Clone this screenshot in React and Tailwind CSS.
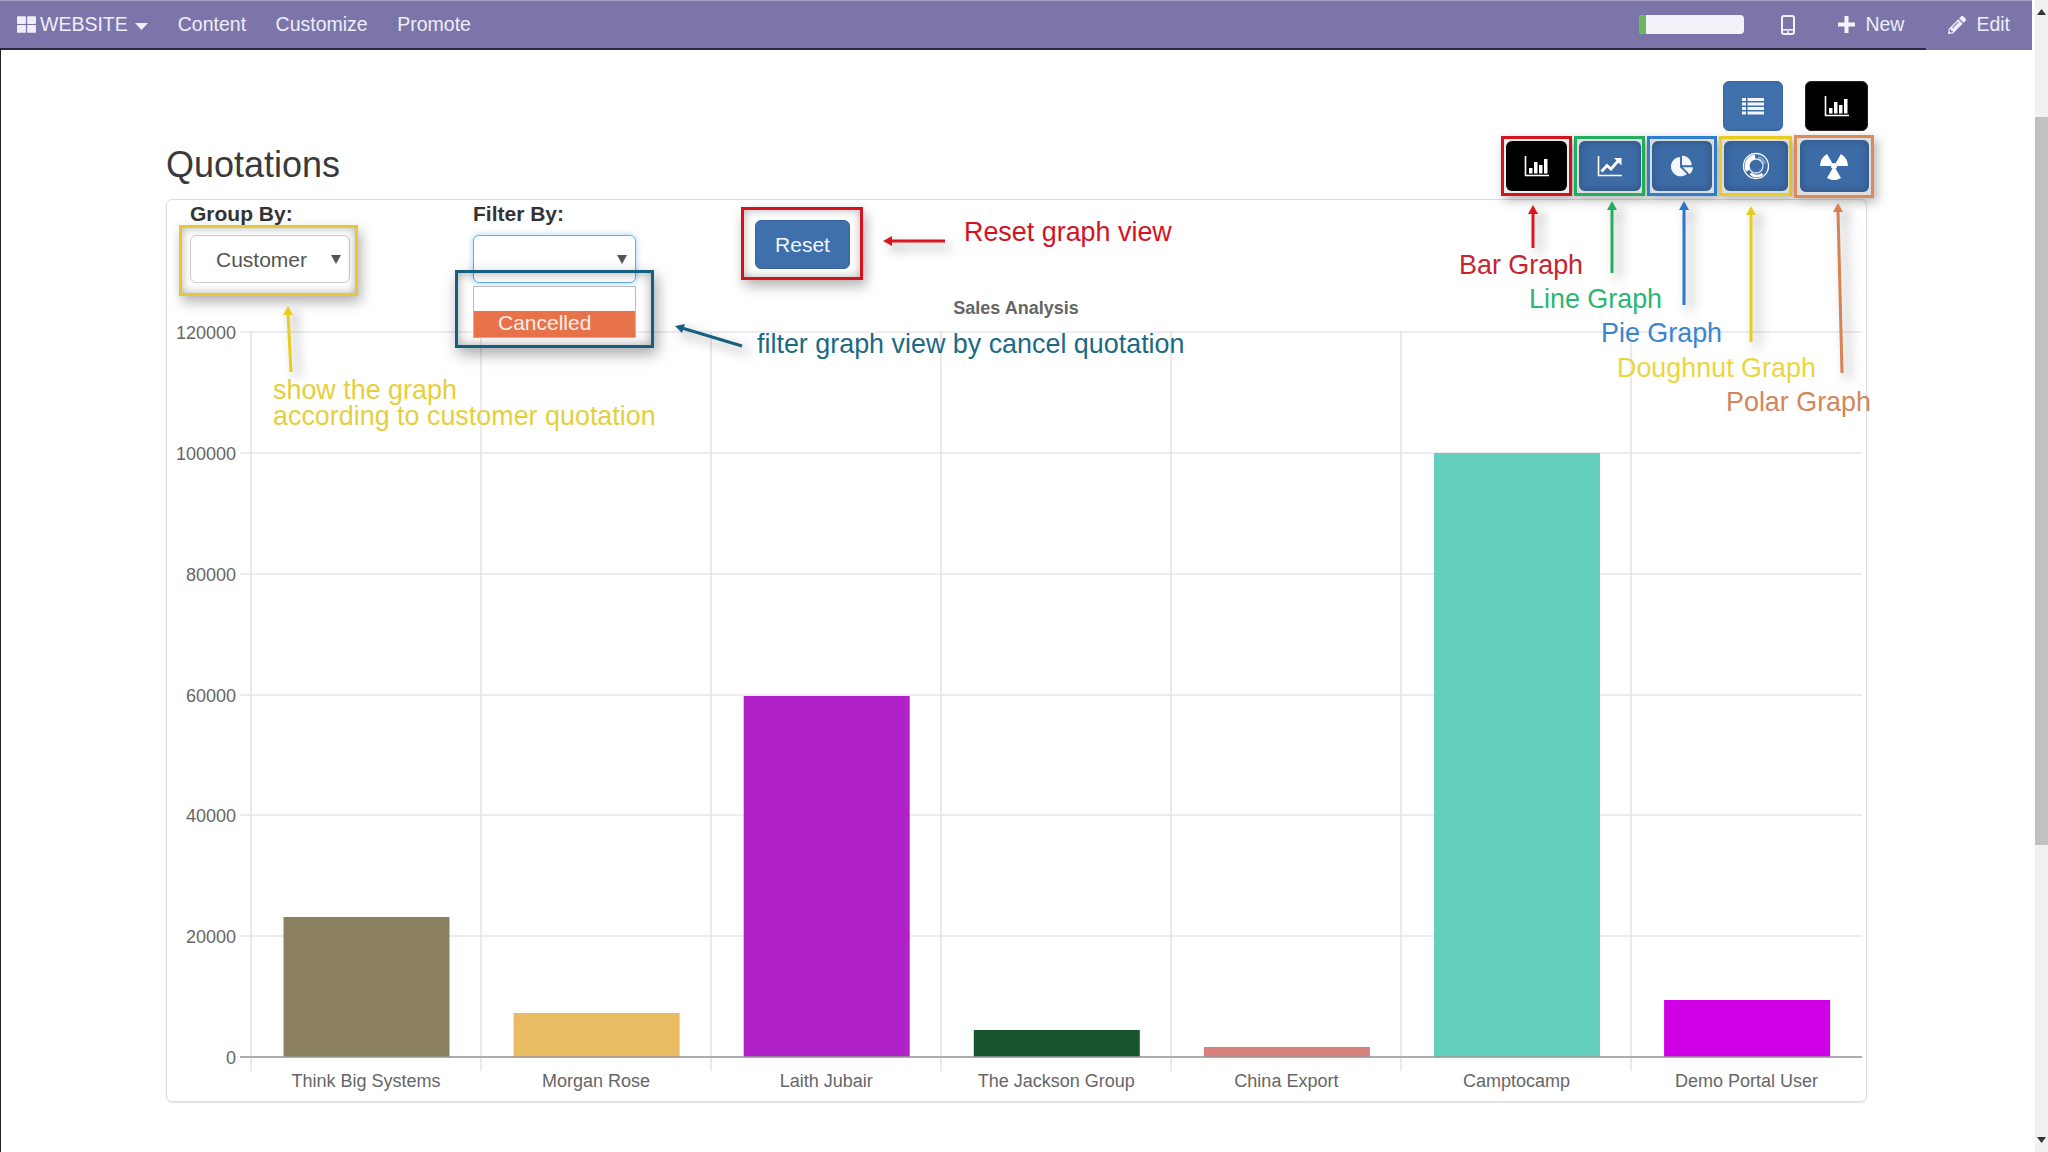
import { FaChartPie, FaPencilAlt, FaThLarge } from "react-icons/fa";

const yTicks = [
  { label: "120000", y: 332 },
  { label: "100000", y: 453 },
  { label: "80000", y: 574 },
  { label: "60000", y: 695 },
  { label: "40000", y: 815 },
  { label: "20000", y: 936 },
  { label: "0", y: 1057 },
];

const bars = [
  { label: "Think Big Systems", top: 917, color: "#8b8160" },
  { label: "Morgan Rose", top: 1013, color: "#e9bb62" },
  { label: "Laith Jubair", top: 696, color: "#b022c8" },
  { label: "The Jackson Group", top: 1030, color: "#16552e" },
  { label: "China Export", top: 1047, color: "#d6807c" },
  { label: "Camptocamp", top: 453, color: "#65cfbd" },
  { label: "Demo Portal User", top: 1000, color: "#cf00e6" },
];

function ListIcon() {
  return (
    <svg width="22" height="18" viewBox="0 0 22 18" fill="#f4f6fb">
      <path d="M0 1h4v3H0zM5.500 1H22v3H5.500zM0 5.500h4v3H0zM5.500 5.500H22v3H5.500zM0 10h4v3H0zM5.500 10H22v3H5.500zM0 14.500h4v3H0zM5.500 14.500H22v3H5.500z" />
    </svg>
  );
}

function BarIcon() {
  return (
    <svg width="26" height="24" viewBox="0 0 26 24" fill="none">
      <path d="M1.500 2v19.500H25" stroke="white" strokeWidth="1.6" />
      <path d="M5 14h3.500v5.500H5zM10 8h3.500v11.500H10zM15 11h3.500v8.500H15zM20 5h3.500v14.500H20z" fill="white" />
    </svg>
  );
}

function LineIcon() {
  return (
    <svg width="26" height="24" viewBox="0 0 26 24" fill="none">
      <path d="M1.500 2v19.500H25" stroke="white" strokeWidth="1.6" />
      <path d="M4.500 17.500l5.500-6 4 3.500 7-8" stroke="white" strokeWidth="2.8" />
      <path d="M17 4h7.500v7.500z" fill="white" />
    </svg>
  );
}

function DoughnutIcon() {
  return (
    <svg width="28" height="28" viewBox="0 0 28 28" fill="none" stroke="white">
      <circle cx="14" cy="14" r="12.500" strokeWidth="1.300" />
      <circle cx="14" cy="14" r="7" strokeWidth="1.300" opacity="0.8" />
      <path d="M6.200 18.500A9 9 0 0 1 13.200 5" strokeWidth="4.500" />
      <path d="M16 5.500A9 9 0 0 1 22.800 12" strokeWidth="3" opacity="0.35" />
      <path d="M8.500 21.500a9 9 0 0 0 12 .5" strokeWidth="2.500" />
    </svg>
  );
}

function PolarIcon() {
  const blade = "M15.500 16.600L21 26.100A14 14 0 0 1 7 26.100L12.500 16.600A3 3 0 0 0 15.500 16.600Z";
  return (
    <svg width="28" height="28" viewBox="0 0 28 28" fill="white">
      <path d={blade} />
      <path d={blade} transform="rotate(120 14 14)" />
      <path d={blade} transform="rotate(240 14 14)" />
      <circle cx="14" cy="14" r="3" />
    </svg>
  );
}

function PlusIcon() {
  return (
    <svg width="17" height="17" viewBox="0 0 17 17">
      <path d="M6.500 0h4v6.500H17v4h-6.500V17h-4v-6.500H0v-4h6.500z" fill="#f4f4fc" />
    </svg>
  );
}

function MobileIcon() {
  return (
    <svg width="14" height="20" viewBox="0 0 14 20" fill="none">
      <rect x="1" y="1" width="12" height="18" rx="2" stroke="#f2f2fa" strokeWidth="2" />
      <rect x="1" y="14" width="12" height="1.600" fill="#f2f2fa" />
      <circle cx="7" cy="17" r="1" fill="#f2f2fa" />
    </svg>
  );
}

function FakeSelect({ value, focused }) {
  return (
    <div
      className={
        focused
          ? "relative flex h-[48px] items-center rounded-md border border-[#66afe9] bg-white pl-[25px] pt-px shadow-[0_0_6px_rgba(102,175,233,0.6)]"
          : "relative flex h-[48px] items-center rounded-md border border-[#ccc] bg-white pl-[25px] pt-px"
      }
    >
      <span className="text-[21px] text-[#555]">{value}</span>
      <svg width="10" height="10" viewBox="0 0 10 10" className="absolute right-[8px] top-[18px]">
        <path d="M0 1h10L5 10z" fill="#555" />
      </svg>
    </div>
  );
}

function Chart() {
  return (
    <svg viewBox="167 290 1698 811" className="block h-[811px] w-[1698px]">
      <text x="1016" y="314" textAnchor="middle" fontSize="18" fontWeight="700" fill="#666">
        Sales Analysis
      </text>
      {yTicks.map((t) => (
        <g key={t.label}>
          <line x1="240" x2="1862" y1={t.y} y2={t.y} stroke="#e8e6ea" strokeWidth="1.500" />
          <text x="236" y={t.y + 7} textAnchor="end" fontSize="18" fill="#666">
            {t.label}
          </text>
        </g>
      ))}
      {bars.map((b, i) => (
        <g key={b.label}>
          <line x1={251 + i * 230} x2={251 + i * 230} y1="332" y2="1071" stroke="#e4e2e8" strokeWidth="1.500" />
          <rect x={283.5 + i * 230.1} y={b.top} width="166" height={1057 - b.top} fill={b.color} />
          <text x={366 + i * 230.1} y="1087" textAnchor="middle" fontSize="18" fill="#666">
            {b.label}
          </text>
        </g>
      ))}
      <line x1="240" x2="1862" y1="1057" y2="1057" stroke="#999" strokeWidth="1.500" />
    </svg>
  );
}

function Annotations() {
  return (
    <>
      <svg width="2048" height="1152" viewBox="0 0 2048 1152" className="pointer-events-none absolute left-0 top-0 [filter:drop-shadow(6px_6px_6px_rgba(0,0,0,0.4))]">
        <g fill="none" strokeWidth="3">
          <path d="M1533 248V212" stroke="#dc1420" />
          <path d="M1612 273V208" stroke="#22b060" />
          <path d="M1684 305V208" stroke="#2e74c8" />
          <path d="M1751 342V213" stroke="#e8cd20" />
          <path d="M1842 373L1838 210" stroke="#d98150" />
          <path d="M945 241H890" stroke="#dc1420" />
          <path d="M742 346L682 328" stroke="#155f80" />
          <path d="M291 372L288 313" stroke="#e8cd20" />
        </g>
        <path d="M1533 205l-5 9h10z" fill="#dc1420" />
        <path d="M1612 201l-5 9h10z" fill="#22b060" />
        <path d="M1684 201l-5 9h10z" fill="#2e74c8" />
        <path d="M1751 206l-5 9h10z" fill="#e8cd20" />
        <path d="M1838 203l-5 9h10z" fill="#d98150" />
        <path d="M883 241l9-5v10z" fill="#dc1420" />
        <path d="M675 326l10-2-3 9z" fill="#155f80" />
        <path d="M288 306l-5 9h10z" fill="#e8cd20" />
      </svg>
      <span className="absolute left-[964px] top-[217px] text-[26.9px] leading-[30px] text-[#d6121f]">Reset graph view</span>
      <span className="absolute left-[757px] top-[329px] text-[26.9px] leading-[30px] text-[#1b6a85]">filter graph view by cancel quotation</span>
      <span className="absolute left-[273px] top-[377px] text-[26.9px] leading-[26px] text-[#e6cf3c]">
        show the graph
        <br />
        according to customer quotation
      </span>
      <span className="absolute left-[1459px] top-[250px] text-[26.9px] leading-[30px] text-[#c8242f]">Bar Graph</span>
      <span className="absolute left-[1529px] top-[284px] text-[26.9px] leading-[30px] text-[#2bb673]">Line Graph</span>
      <span className="absolute left-[1601px] top-[318px] text-[26.9px] leading-[30px] text-[#3a85d0]">Pie Graph</span>
      <span className="absolute left-[1617px] top-[353px] text-[26.9px] leading-[30px] text-[#ebd63c]">Doughnut Graph</span>
      <span className="absolute left-[1726px] top-[387px] text-[26.9px] leading-[30px] text-[#d4865a]">Polar Graph</span>
    </>
  );
}

export default function App() {
  return (
    <div className="relative flex h-[1152px] w-[2048px] overflow-hidden bg-white font-['Liberation_Sans',sans-serif]">
      <div className="w-[2032px] shrink-0 border-l border-[#222]">
        {/* Top bar */}
        <div className="-ml-px relative flex h-[50px] items-center justify-between border-t border-[#a9a3c8] bg-[#7c75a9] pb-[2px] pl-[17px] pr-[22px] text-[19.5px] text-[#eeeefc]">
          <div className="flex items-center">
            <FaThLarge size={19} />
            <span className="ml-[4px]">WEBSITE</span>
            <svg width="13" height="7" viewBox="0 0 13 7" className="ml-[7px] mt-[3px]">
              <path d="M0 0h13L6.500 7z" fill="#eeeefc" />
            </svg>
            <span className="ml-[30px]">Content</span>
            <span className="ml-[29.5px]">Customize</span>
            <span className="ml-[29.5px]">Promote</span>
          </div>
          <div className="flex items-center">
            <div className="h-[19px] w-[105px] overflow-hidden rounded-[4px] bg-[#f2f3f8]">
              <div className="h-full w-[7px] bg-[#6cb65c]" />
            </div>
            <span className="ml-[37px]">
              <MobileIcon />
            </span>
            <span className="ml-[43px]">
              <PlusIcon />
            </span>
            <span className="ml-[10px]">New</span>
            <FaPencilAlt size={18} className="ml-[44px]" />
            <span className="ml-[10px]">Edit</span>
          </div>
          <div className="absolute bottom-0 left-0 h-[2px] w-[1926px] bg-[#2b2844]" />
        </div>

        <div className="ml-[165px] w-[1701px]">
          <div className="mt-[31px] -mr-[1px] flex justify-end gap-[22px]">
            <button className="flex h-[50px] w-[60px] items-center justify-center rounded-md border border-[#39659c] bg-[#3f70ac]">
              <ListIcon />
            </button>
            <button className="flex h-[50px] w-[63px] items-center justify-center rounded-md border border-[#222] bg-black">
              <BarIcon />
            </button>
          </div>

          <div className="mt-[5px] flex h-[60px] items-center justify-between">
            <h1 className="-mt-[2px] text-[36px] font-normal leading-[60px] text-[#3a3a3a]">Quotations</h1>
            <div className="-mr-[7px] flex items-center gap-[2px]">
              <div className="flex h-[60px] w-[71px] items-center justify-center border-[3px] border-[#d6121f] bg-[#eee] shadow-[3px_4px_10px_rgba(0,0,0,0.3)]">
                <button className="flex h-[50px] w-[61px] items-center justify-center rounded-md bg-black">
                  <BarIcon />
                </button>
              </div>
              <div className="flex h-[60px] w-[71px] items-center justify-center border-[3px] border-[#22b060] bg-[#ddd] shadow-[3px_4px_10px_rgba(0,0,0,0.3)]">
                <button className="flex h-[50px] w-[62px] items-center justify-center rounded-md bg-[#3d6ba6] shadow-[inset_0_0_8px_rgba(0,0,0,0.25)]">
                  <LineIcon />
                </button>
              </div>
              <div className="flex h-[60px] w-[70px] items-center justify-center border-[3px] border-[#2e7fd0] bg-[#ddd] shadow-[3px_4px_10px_rgba(0,0,0,0.3)]">
                <button className="flex h-[50px] w-[60px] items-center justify-center rounded-md bg-[#3d6ba6] text-[#f4f6fb] shadow-[inset_0_0_8px_rgba(0,0,0,0.25)]">
                  <FaChartPie size={22} />
                </button>
              </div>
              <div className="flex h-[60px] w-[73px] items-center justify-center border-[3px] border-[#e8cd20] bg-[#ddd] shadow-[3px_4px_10px_rgba(0,0,0,0.3)]">
                <button className="flex h-[50px] w-[64px] items-center justify-center rounded-md bg-[#3d6ba6] shadow-[inset_0_0_8px_rgba(0,0,0,0.25)]">
                  <DoughnutIcon />
                </button>
              </div>
              <div className="flex h-[63px] w-[80px] items-center justify-center border-[3px] border-[#dd8a58] bg-[#ddd] shadow-[3px_4px_10px_rgba(0,0,0,0.3)]">
                <button className="flex h-[52px] w-[69px] items-center justify-center rounded-md bg-[#3d6ba6] shadow-[inset_0_0_8px_rgba(0,0,0,0.25)]">
                  <PolarIcon />
                </button>
              </div>
            </div>
          </div>

          {/* Panel */}
          <div className="mt-[3px] h-[903px] rounded-md border border-[#ddd] shadow-[0_1px_2px_rgba(0,0,0,0.1)]">
            <div className="relative flex h-[90px] pl-[23px] pt-[3px]">
              <div className="w-[160px]">
                <div className="h-[32px] text-[21px] font-bold leading-[22px] text-[#333]">Group By:</div>
                <div className="relative">
                  <FakeSelect value="Customer" />
                  <div className="absolute -bottom-[13px] -left-[11px] -right-[8px] -top-[10px] border-[3px] border-[#e6c92f] shadow-[3px_6px_12px_rgba(0,0,0,0.3),inset_0_0_10px_rgba(0,0,0,0.3)]" />
                </div>
              </div>
              <div className="ml-[123px] w-[163px]">
                <div className="h-[32px] text-[21px] font-bold leading-[22px] text-[#333]">Filter By:</div>
                <div className="relative">
                  <FakeSelect value="" focused />
                  <div className="absolute left-0 right-0 top-[51px] z-10 border border-[#bbb] bg-white">
                    <div className="h-[24px]" />
                    <div className="h-[26px] bg-[#e8734a] pl-[24px] text-[21px] leading-[23px] text-[#fbeee8]">Cancelled</div>
                  </div>
                  <div className="absolute -left-[18px] -right-[18px] top-[35px] z-10 h-[78px] border-[3px] border-[#155f80] shadow-[3px_6px_14px_rgba(0,0,0,0.35),inset_0_0_12px_rgba(0,0,0,0.35)]" />
                </div>
              </div>
              <div className="relative ml-[119px] mt-[17px] h-[49px] w-[95px]">
                <button className="h-[49px] w-[95px] rounded-md border border-[#39659c] bg-[#3f70ac] text-[21px] text-[#f2f5fb]">Reset</button>
                <div className="absolute -bottom-[11px] -left-[14px] -right-[13px] -top-[13px] border-[3px] border-[#d6121f] shadow-[3px_6px_12px_rgba(0,0,0,0.3),inset_0_0_10px_rgba(0,0,0,0.3)]" />
              </div>
            </div>
            <Chart />
          </div>
        </div>
      </div>

      {/* Scrollbar */}
      <div className="flex w-[16px] flex-col items-stretch bg-white pl-[3px]">
        <div className="flex h-[117px] justify-center bg-[#f1f1f1] pt-[9px]">
          <svg width="9" height="6" viewBox="0 0 9 6">
            <path d="M0 6h9L4.500 0z" fill="#333" />
          </svg>
        </div>
        <div className="h-[728px] bg-[#c1c1c1]" />
        <div className="flex flex-1 items-end justify-center bg-[#f1f1f1] pb-[9px]">
          <svg width="9" height="6" viewBox="0 0 9 6">
            <path d="M0 0h9L4.500 6z" fill="#333" />
          </svg>
        </div>
      </div>

      <Annotations />
    </div>
  );
}
